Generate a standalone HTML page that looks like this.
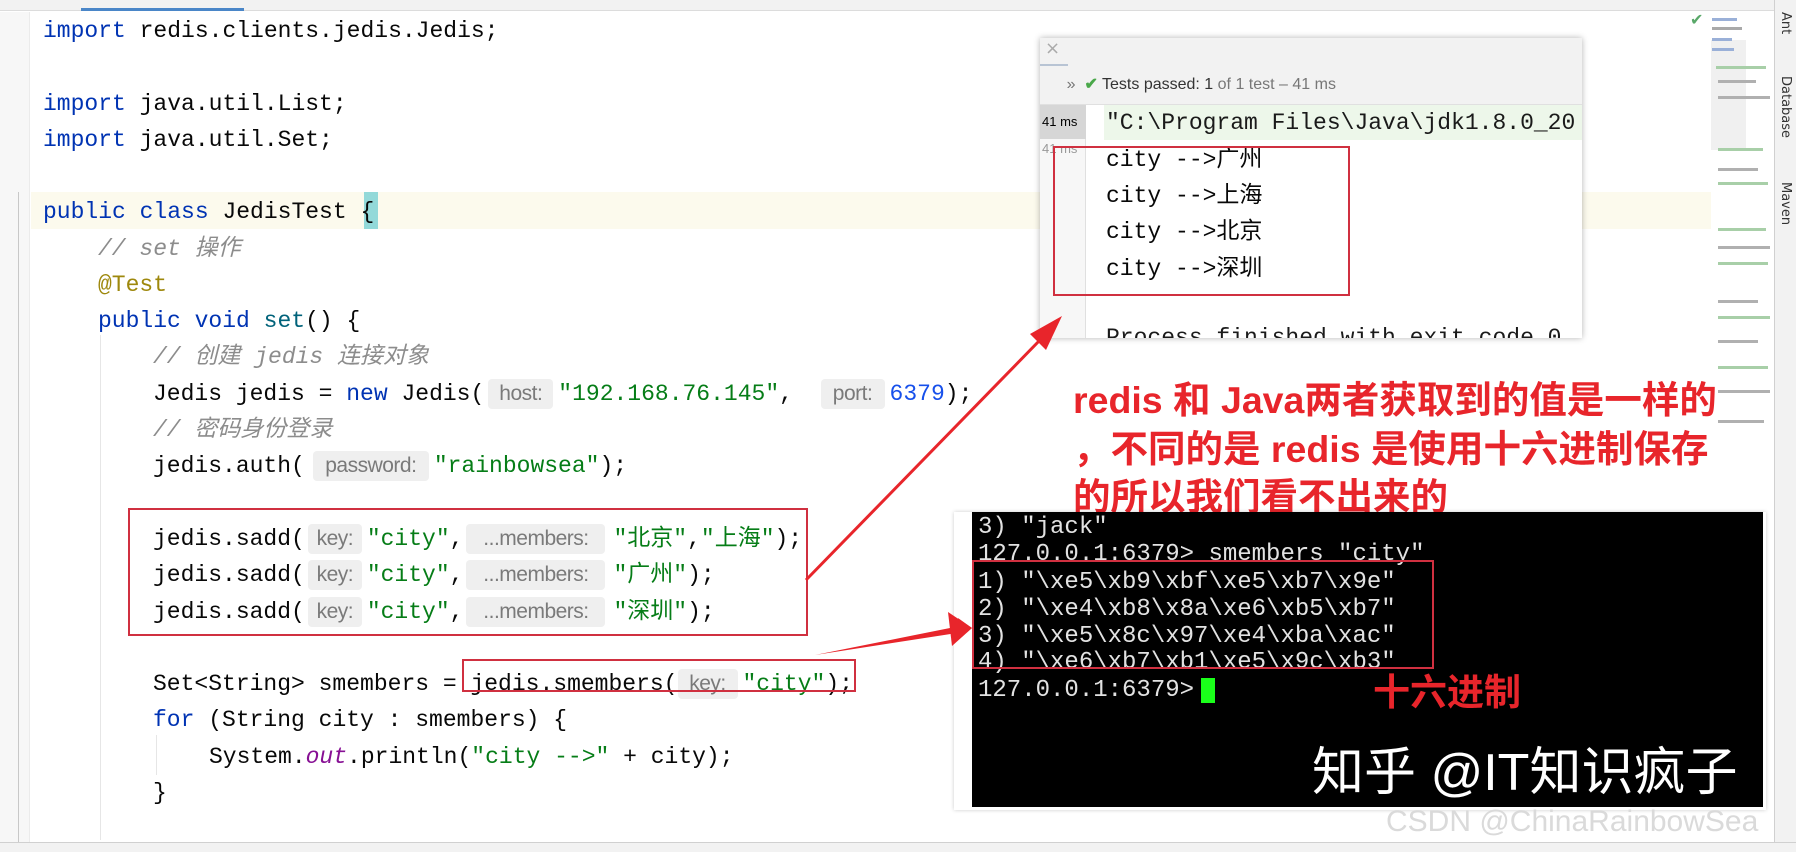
<!DOCTYPE html>
<html><head><meta charset="utf-8">
<style>
*{margin:0;padding:0;box-sizing:border-box}
body{width:1796px;height:852px;overflow:hidden;background:#fff;position:relative;font-family:"Liberation Mono","Noto Sans CJK SC",monospace}
.abs{position:absolute}
.ln{position:absolute;height:36px;line-height:36px;font-size:23px;white-space:pre;color:#080808}
.k{color:#0033b3}.s{color:#067d17}.c{color:#8c8c8c;font-style:italic}.a{color:#9e880d}.n{color:#1750eb}.o{color:#871094;font-style:italic}
.h{display:inline-block;height:30px;line-height:30px;vertical-align:top;margin-top:3px;background:#efefef;border-radius:4px;color:#7a7a7a;font-family:"Liberation Sans",sans-serif;font-size:21px;text-align:center;letter-spacing:-0.5px;margin-right:5px}
.box{position:absolute;border:2px solid #d03040}
.t{position:absolute;font-size:24px;line-height:27px;color:#e2e2e2;white-space:pre}
.red{position:absolute;color:#e8252b;font-family:"Liberation Sans","Noto Sans CJK SC",sans-serif;font-weight:bold;white-space:nowrap}
.mm{position:absolute;height:3px}
</style></head><body>
<div class="abs" style="left:0;top:0;width:1774px;height:11px;background:#f2f2f2;border-bottom:1px solid #dcdcdc"></div>
<div class="abs" style="left:81px;top:8px;width:163px;height:3px;background:#4a86c8"></div>
<div class="abs" style="left:0;top:12px;width:30px;height:830px;background:#f7f7f7;border-right:1px solid #ebebeb"></div>
<div class="abs" style="left:18px;top:192px;width:1px;height:650px;background:#c8c8c8"></div>
<div class="abs" style="left:31px;top:192px;width:1680px;height:37px;background:#fcfaed"></div>
<div class="abs" style="left:364px;top:192px;width:14px;height:37px;background:#93d9d9"></div>
<div class="abs" style="left:100px;top:335px;width:1px;height:505px;background:#e6e6e6"></div>
<div class="abs" style="left:156px;top:735px;width:1px;height:40px;background:#e6e6e6"></div>

<div class="ln" style="left:43px;top:13px"><span class="k">import</span> redis.clients.jedis.Jedis;</div>
<div class="ln" style="left:43px;top:86px"><span class="k">import</span> java.util.List;</div>
<div class="ln" style="left:43px;top:122px"><span class="k">import</span> java.util.Set;</div>
<div class="ln" style="left:43px;top:194px"><span class="k">public class</span> JedisTest {</div>
<div class="ln c" style="left:98px;top:231px">// set 操作</div>
<div class="ln a" style="left:98px;top:267px">@Test</div>
<div class="ln" style="left:98px;top:303px"><span class="k">public void</span> <span style="color:#00627a">set</span>() {</div>
<div class="ln c" style="left:153px;top:339px">// 创建 jedis 连接对象</div>
<div class="ln" style="left:153px;top:376px">Jedis jedis = <span class="k">new</span> Jedis(<span class="h" style="width:65px;margin-left:4px">host:</span><span class="s">"192.168.76.145"</span>,  <span class="h" style="width:64px">port:</span><span class="n">6379</span>);</div>
<div class="ln c" style="left:153px;top:412px">// 密码身份登录</div>
<div class="ln" style="left:153px;top:448px">jedis.auth(<span class="h" style="width:116px;margin-left:8px">password:</span><span class="s">"rainbowsea"</span>);</div>
<div class="ln" style="left:153px;top:521px">jedis.sadd(<span class="h" style="width:54px;margin-left:3px">key:</span><span class="s">"city"</span>,<span class="h" style="width:139px;margin-left:3px;margin-right:8px">...members:</span><span class="s">"北京"</span>,<span class="s">"上海"</span>);</div>
<div class="ln" style="left:153px;top:557px">jedis.sadd(<span class="h" style="width:54px;margin-left:3px">key:</span><span class="s">"city"</span>,<span class="h" style="width:139px;margin-left:3px;margin-right:8px">...members:</span><span class="s">"广州"</span>);</div>
<div class="ln" style="left:153px;top:594px">jedis.sadd(<span class="h" style="width:54px;margin-left:3px">key:</span><span class="s">"city"</span>,<span class="h" style="width:139px;margin-left:3px;margin-right:8px">...members:</span><span class="s">"深圳"</span>);</div>
<div class="ln" style="left:153px;top:666px">Set&lt;String&gt; smembers = jedis.smembers(<span class="h" style="width:60px">key:</span><span class="s">"city"</span>);</div>
<div class="ln" style="left:153px;top:702px"><span class="k">for</span> (String city : smembers) {</div>
<div class="ln" style="left:209px;top:739px">System.<span class="o">out</span>.println(<span class="s">"city --&gt;"</span> + city);</div>
<div class="ln" style="left:153px;top:775px">}</div>

<div class="box" style="left:128px;top:508px;width:680px;height:128px"></div>
<div class="box" style="left:462px;top:659px;width:394px;height:33px"></div>

<div class="abs" style="left:1690px;top:14px;width:12px;height:12px;color:#59a869;font-size:16px;line-height:12px;font-family:'DejaVu Sans'">✔</div>
<div class="abs" style="left:1711px;top:40px;width:35px;height:110px;background:#f0f0f0"></div>
<div class="mm" style="left:1712px;top:18px;width:25px;background:#9ab0d8"></div>
<div class="mm" style="left:1712px;top:27px;width:30px;background:#a9a9a9"></div>
<div class="mm" style="left:1712px;top:38px;width:20px;background:#9ab0d8"></div>
<div class="mm" style="left:1712px;top:48px;width:22px;background:#9ab0d8"></div>
<div class="mm" style="left:1716px;top:66px;width:50px;background:#a8cfa8"></div>
<div class="mm" style="left:1718px;top:80px;width:38px;background:#b0b0b0"></div>
<div class="mm" style="left:1718px;top:96px;width:52px;background:#b0b0b0"></div>
<div class="mm" style="left:1718px;top:148px;width:45px;background:#a8cfa8"></div>
<div class="mm" style="left:1718px;top:168px;width:40px;background:#b0b0b0"></div>
<div class="mm" style="left:1718px;top:182px;width:50px;background:#a8cfa8"></div>
<div class="mm" style="left:1718px;top:228px;width:48px;background:#a8cfa8"></div>
<div class="mm" style="left:1718px;top:246px;width:52px;background:#b0b0b0"></div>
<div class="mm" style="left:1718px;top:262px;width:50px;background:#a8cfa8"></div>
<div class="mm" style="left:1718px;top:300px;width:40px;background:#b0b0b0"></div>
<div class="mm" style="left:1718px;top:316px;width:52px;background:#a8cfa8"></div>
<div class="mm" style="left:1718px;top:340px;width:40px;background:#b0b0b0"></div>
<div class="mm" style="left:1718px;top:366px;width:50px;background:#a8cfa8"></div>
<div class="mm" style="left:1718px;top:390px;width:52px;background:#b0b0b0"></div>
<div class="mm" style="left:1718px;top:420px;width:46px;background:#b0b0b0"></div>
<div class="abs" style="left:1774px;top:0;width:22px;height:842px;background:#f2f2f2;border-left:1px solid #d0d0d0"></div>
<div class="abs" style="left:1778px;top:12px;font:13px 'DejaVu Sans',sans-serif;color:#333;writing-mode:vertical-rl">Ant</div>
<div class="abs" style="left:1778px;top:76px;font:13px 'DejaVu Sans',sans-serif;color:#333;writing-mode:vertical-rl">Database</div>
<div class="abs" style="left:1778px;top:182px;font:13px 'DejaVu Sans',sans-serif;color:#333;writing-mode:vertical-rl">Maven</div>

<div class="abs" style="left:1040px;top:38px;width:542px;height:300px;background:#fff;box-shadow:0 0 6px rgba(0,0,0,.3);overflow:hidden">
 <div class="abs" style="left:0;top:0;width:542px;height:66px;background:#f2f2f2"></div>
 <div class="abs" style="left:5px;top:0;color:#aaa;font:18px 'DejaVu Sans',sans-serif">×</div>
 <div class="abs" style="left:0;top:26px;width:28px;height:3px;background:#b8c4d4"></div>
 <div class="abs" style="left:0;top:28px;width:542px;height:38px;background:#f2f2f2;font:16px 'Liberation Sans',sans-serif;line-height:38px;white-space:pre;color:#333"><span style="color:#777">      »  </span><span style="color:#4aa84a;font-weight:bold">✔</span> Tests passed: 1 <span style="color:#777">of 1 test – 41 ms</span></div>
 <div class="abs" style="left:0;top:66px;width:542px;height:1px;background:#e0e0e0"></div>
 <div class="abs" style="left:0;top:67px;width:46px;height:233px;background:#f7f7f7;border-right:1px solid #e0e0e0"></div>
 <div class="abs" style="left:0;top:67px;width:46px;height:34px;background:#d6d6d6;font:13px 'Liberation Sans',sans-serif;line-height:34px;padding-left:2px">41 ms</div>
 <div class="abs" style="left:2px;top:101px;font:13px 'Liberation Sans',sans-serif;line-height:20px;color:#999">41 ms</div>
 <div class="abs" style="left:64px;top:67px;width:480px;height:35px;background:#edf7ea"></div>
 <div class="ln" style="left:66px;top:67px;color:#1a1a1a">"C:\Program Files\Java\jdk1.8.0_20</div>
 <div class="ln" style="left:66px;top:104px">city --&gt;广州</div>
 <div class="ln" style="left:66px;top:140px">city --&gt;上海</div>
 <div class="ln" style="left:66px;top:176px">city --&gt;北京</div>
 <div class="ln" style="left:66px;top:213px">city --&gt;深圳</div>
 <div class="ln" style="left:66px;top:282px;color:#1a1a1a">Process finished with exit code 0</div>
</div>
<div class="box" style="left:1053px;top:146px;width:297px;height:150px"></div>

<div class="red" style="left:1073px;top:377px;font-size:37.5px;line-height:46px">redis 和 Java两者获取到的值是一样的</div>
<div class="red" style="left:1073px;top:426px;font-size:37.5px;line-height:46px">，不同的是 redis 是使用十六进制保存</div>
<div class="red" style="left:1073px;top:474px;font-size:37.5px;line-height:46px">的所以我们看不出来的</div>

<div class="abs" style="left:954px;top:512px;width:812px;height:298px;background:#fff;box-shadow:0 0 4px rgba(0,0,0,.2)"></div>
<div class="abs" style="left:972px;top:512px;width:791px;height:295px;background:#000"></div>
<div class="t" style="left:978px;top:514px">3) "jack"</div>
<div class="t" style="left:978px;top:541px">127.0.0.1:6379&gt; smembers "city"</div>
<div class="t" style="left:978px;top:569px">1) "\xe5\xb9\xbf\xe5\xb7\x9e"</div>
<div class="t" style="left:978px;top:596px">2) "\xe4\xb8\x8a\xe6\xb5\xb7"</div>
<div class="t" style="left:978px;top:623px">3) "\xe5\x8c\x97\xe4\xba\xac"</div>
<div class="t" style="left:978px;top:649px">4) "\xe6\xb7\xb1\xe5\x9c\xb3"</div>
<div class="t" style="left:978px;top:677px">127.0.0.1:6379&gt; </div>
<div class="abs" style="left:1201px;top:678px;width:14px;height:25px;background:#1aff1a"></div>
<div class="box" style="left:972px;top:560px;width:462px;height:109px"></div>
<div class="red" style="left:1373px;top:670px;font-size:37px;line-height:46px">十六进制</div>
<div class="abs" style="left:1312px;top:741px;color:#fff;font:52px 'Liberation Sans','Noto Sans CJK SC',sans-serif;line-height:64px;white-space:nowrap">知乎 @IT知识疯子</div>

<svg class="abs" style="left:0;top:0" width="1796" height="852">
 <line x1="806" y1="580" x2="1040" y2="340" stroke="#e8252b" stroke-width="3"/>
 <polygon points="1062,316 1030,334 1046,350" fill="#e8252b"/>
 <polygon points="815,655 960,626 958,618 972,628 956,642 957,633" fill="#e8252b"/>
 <polygon points="972,628 948,612 952,646" fill="#e8252b"/>
</svg>

<div class="abs" style="left:1386px;top:804px;color:#dadada;font:30px 'Liberation Sans',sans-serif;line-height:36px;white-space:nowrap">CSDN @ChinaRainbowSea</div>
<div class="abs" style="left:0;top:842px;width:1796px;height:10px;background:#f2f2f2;border-top:1px solid #d0d0d0"></div>
</body></html>
